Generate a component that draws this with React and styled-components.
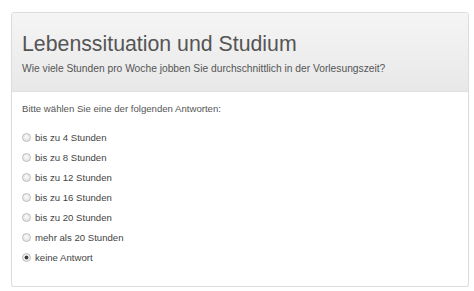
import React from 'react';
import styled, { createGlobalStyle } from 'styled-components';

const GlobalStyle = createGlobalStyle`
  body {
    margin: 0;
    background: #ffffff;
    font-family: "Liberation Sans", Arial, sans-serif;
  }
`;

const Page = styled.div`
  padding: 12px 0 0 11px;
`;

const Panel = styled.section`
  width: 456px;
  height: 273px;
  border: 1px solid #dcdcdc;
  border-radius: 3px;
  background: #fff;
  box-shadow: 0 1px 1px rgba(0, 0, 0, 0.05);
  overflow: hidden;
  display: flex;
  flex-direction: column;
`;

const Heading = styled.header`
  padding: 19px 10px 15px;
  background: linear-gradient(to bottom, #f5f5f5 0%, #e8e8e8 100%);
  border-bottom: 1px solid #e0e0e0;
`;

const Title = styled.h1`
  margin: 0 0 6px;
  font-size: 21.3px;
  line-height: 24px;
  font-weight: 400;
  color: #555;
`;

const Question = styled.p`
  margin: 0;
  font-size: 10.25px;
  line-height: 14px;
  color: #555;
`;

const Body = styled.div`
  padding: 10px 10px 0;
`;

const Intro = styled.p`
  margin: 0 0 11px;
  font-size: 9.6px;
  line-height: 14px;
  color: #555;
`;

const Options = styled.div`
  display: flex;
  flex-direction: column;
`;

const Option = styled.label`
  display: flex;
  align-items: center;
  height: 20px;
  font-size: 9.6px;
  color: #444;
`;

const Radio = styled.input.attrs({ type: 'radio' })`
  appearance: none;
  margin: 0 4px 0 0;
  width: 9px;
  height: 9px;
  border-radius: 50%;
  border: 1px solid #bdbdbd;
  background: radial-gradient(circle at 50% 40%, #fafafa 0%, #dedede 100%);
  box-sizing: border-box;
  flex: none;

  &:checked {
    background: radial-gradient(circle, #3a3a3a 0, #3a3a3a 1.6px, #e6e6e6 2.2px, #f4f4f4 100%);
  }
`;

const answers = [
  'bis zu 4 Stunden',
  'bis zu 8 Stunden',
  'bis zu 12 Stunden',
  'bis zu 16 Stunden',
  'bis zu 20 Stunden',
  'mehr als 20 Stunden',
  'keine Antwort',
];

export default function App() {
  const [value, setValue] = React.useState('keine Antwort');
  return (
    <>
      <GlobalStyle />
      <Page>
        <Panel>
          <Heading>
            <Title>Lebenssituation und Studium</Title>
            <Question>Wie viele Stunden pro Woche jobben Sie durchschnittlich in der Vorlesungszeit?</Question>
          </Heading>
          <Body>
            <Intro>Bitte wählen Sie eine der folgenden Antworten:</Intro>
            <Options>
              {answers.map((a) => (
                <Option key={a}>
                  <Radio
                    name="jobben"
                    checked={value === a}
                    onChange={() => setValue(a)}
                  />
                  {a}
                </Option>
              ))}
            </Options>
          </Body>
        </Panel>
      </Page>
    </>
  );
}
